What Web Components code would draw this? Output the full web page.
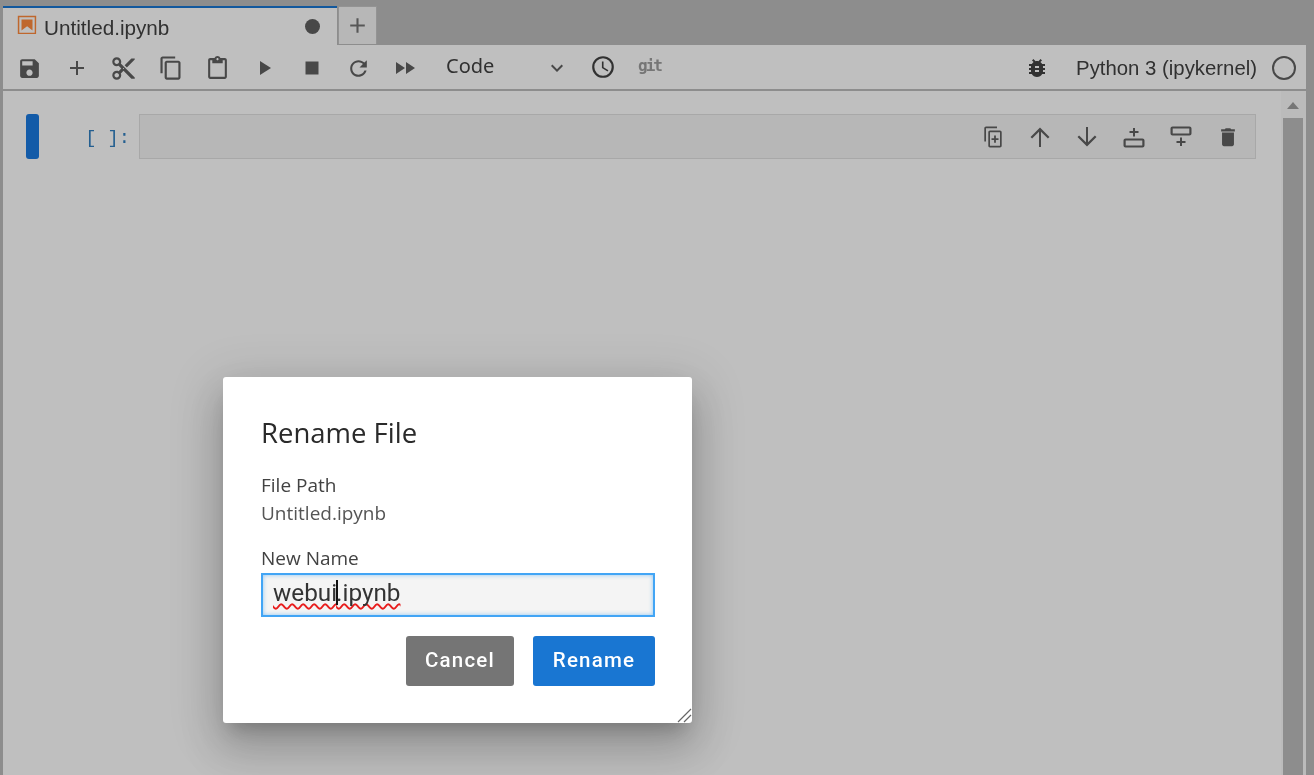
<!DOCTYPE html>
<html lang="en"><head><meta charset="utf-8"><title>Rename File</title>
<style>html,body{margin:0;height:100%;overflow:hidden;background:#8e8e8e}</style></head>
<body>
<jp-app></jp-app>
<script>
const P={
save:'<path d="M17 3H5c-1.11 0-2 .9-2 2v14c0 1.1.89 2 2 2h14c1.1 0 2-.9 2-2V7l-4-4zm-5 16c-1.66 0-3-1.34-3-3s1.34-3 3-3 3 1.34 3 3-1.34 3-3 3zm3-10H5V5h10v4z"/>',
add:'<path d="M19 13h-6v6h-2v-6H5v-2h6V5h2v6h6v2z"/>',
cut:'<path d="M9.64 7.64c.23-.5.36-1.05.36-1.64 0-2.21-1.79-4-4-4S2 3.79 2 6s1.79 4 4 4c.59 0 1.14-.13 1.64-.36L10 12l-2.36 2.36C7.14 14.13 6.59 14 6 14c-2.21 0-4 1.79-4 4s1.79 4 4 4 4-1.79 4-4c0-.59-.13-1.14-.36-1.64L12 14l7 7h3v-1L9.64 7.64zM6 8c-1.1 0-2-.89-2-2s.9-2 2-2 2 .89 2 2-.9 2-2 2zm0 12c-1.1 0-2-.89-2-2s.9-2 2-2 2 .89 2 2-.9 2-2 2zm6-7.5c-.28 0-.5-.22-.5-.5s.22-.5.5-.5.5.22.5.5-.22.5-.5.5zM19 3l-6 6 2 2 7-7V3z"/>',
copy:'<path transform="scale(1.333)" d="M11.9 1H3.2C2.4 1 1.7 1.7 1.7 2.5v10.2h1.5V2.5h8.7V1zM14.1 3.9h-8c-.8 0-1.5.7-1.5 1.5v10.2c0 .8.7 1.5 1.5 1.5h8c.8 0 1.5-.7 1.5-1.5V5.4c0-.8-.7-1.5-1.5-1.5zm0 11.6h-8V5.4h8v10.1z"/>',
paste:'<path d="M19 2h-4.18C14.4.84 13.3 0 12 0c-1.3 0-2.4.84-2.82 2H5c-1.1 0-2 .9-2 2v16c0 1.1.9 2 2 2h14c1.1 0 2-.9 2-2V4c0-1.1-.9-2-2-2zm-7 0c.55 0 1 .45 1 1s-.45 1-1 1-1-.45-1-1 .45-1 1-1zm7 18H5V4h2v3h10V4h2v16z"/>',
run:'<path d="M7 5v14l11-7z"/>',
stop:'<path d="M5.500 5.500h13v13h-13z"/>',
refresh:'<path d="M17.65 6.35C16.2 4.9 14.21 4 12 4c-4.42 0-7.99 3.58-7.99 8s3.57 8 7.99 8c3.73 0 6.84-2.55 7.73-6h-2.08c-.82 2.33-3.04 4-5.65 4-3.31 0-6-2.69-6-6s2.69-6 6-6c1.66 0 3.14.69 4.22 1.78L13 11h7V4l-2.35 2.35z"/>',
ff:'<path d="M2 18l9-6-9-6v12zm10-12v12l9-6-9-6z"/>',
chevron:'<path d="M7.41 8.59L12 13.17l4.59-4.58L18 10l-6 6-6-6z"/>',
clock:'<path d="M12 2a10 10 0 1 0 0 20 10 10 0 0 0 0-20zm0 18a8 8 0 1 1 0-16 8 8 0 0 1 0 16z"/><path d="M12.5 7H11v6l5.2 3.1.8-1.2-4.5-2.7z"/>',
bug:'<path d="M20 8h-2.81c-.45-.78-1.07-1.45-1.82-1.96L17 4.41 15.59 3l-2.17 2.17C12.96 5.06 12.49 5 12 5c-.49 0-.96.06-1.41.17L8.41 3 7 4.41l1.62 1.63C7.88 6.55 7.26 7.22 6.81 8H4v2h2.09c-.05.33-.09.66-.09 1v1H4v2h2v1c0 .34.04.67.09 1H4v2h2.81c1.04 1.79 2.97 3 5.19 3s4.15-1.21 5.19-3H20v-2h-2.09c.05-.33.09-.66.09-1v-1h2v-2h-2v-1c0-.34-.04-.67-.09-1H20V8zm-6 8h-4v-2h4v2zm0-4h-4v-2h4v2z"/>',
dup:'<path d="M5 1.500h11V3.200H5v13.300H3.300V3.200C3.300 2.300 4.100 1.500 5 1.500z"/><path d="M9 5.500h10c.9 0 1.700.8 1.700 1.700v13.600c0 .9-.8 1.700-1.700 1.700H9c-.9 0-1.700-.8-1.700-1.700V7.200C7.300 6.300 8.100 5.500 9 5.500zm0 1.700v13.600h10V7.200H9z" fill-rule="evenodd"/><path d="M13.100 10.500h1.800v2.700h2.600v1.800h-2.600v2.700h-1.800V15h-2.600v-1.800h2.600z"/>',
up:'<path d="M2.500 12l1.600 1.600L11 6.800V22h2V6.800l6.900 6.800 1.600-1.600L12 2.500z"/>',
down:'<path d="M21.500 12l-1.600-1.600L13 17.200V2h-2v15.200l-6.900-6.800L2.500 12l9.500 9.500z"/>',
above:'<path d="M11 3h2v3h3.500v2H13v3.500h-2V8H7.500V6H11z"/><path fill-rule="evenodd" d="M3.500 13.500h17c1.100 0 2 .9 2 2v5c0 1.100-.9 2-2 2h-17c-1.100 0-2-.9-2-2v-5c0-1.100.9-2 2-2zm.2 2.100v4.800h16.600v-4.800H3.700z"/>',
below:'<path d="M11 21h2v-3h3.500v-2H13v-3.500h-2V16H7.500v2H11z"/><path fill-rule="evenodd" d="M3.500 1.500h17c1.100 0 2 .9 2 2v5c0 1.100-.9 2-2 2h-17c-1.100 0-2-.9-2-2v-5c0-1.100.9-2 2-2zm.2 2.100v4.800h16.600V3.600H3.700z"/>',
trash:'<path d="M5.500 20c0 1.100.9 2 2 2h9c1.100 0 2-.9 2-2V7h-13v13zM19.500 3.500h-4l-1-1h-5l-1 1h-4V6h15V3.500z"/>'
};
function def(name,html,init){
  customElements.define(name,class extends HTMLElement{
    constructor(){super();this.attachShadow({mode:'open'}).innerHTML=typeof html==='function'?html(this):html;}
    connectedCallback(){ if(init) init(this); }
  });
}
def('jp-icon',`<style>:host{display:inline-flex;width:var(--s,24px);height:var(--s,24px);color:inherit}svg{width:100%;height:100%;fill:currentColor;display:block}</style><svg viewBox="0 0 24 24"></svg>`,
  el=>{el.shadowRoot.querySelector('svg').innerHTML=P[el.getAttribute('name')]||'';});
def('jp-tool',`<style>:host{display:flex;flex:none;box-sizing:border-box;width:var(--w,47px);height:100%;padding-top:var(--pt,0);align-items:center;justify-content:center;color:#616161}</style><slot></slot>`);
def('jp-tabbar',`<style>
:host{display:flex;height:39px;flex:none;font:20.700px "Liberation Sans",Arial,sans-serif;color:#424242}
.tab{width:334px;box-sizing:border-box;background:#fff;border-top:2.500px solid #1976d2;display:flex;align-items:center;padding:0 16px 0 13px}
.logo{width:22px;height:22px;flex:none;margin-right:6px;margin-top:-3px}
.name{flex:1;margin-top:2px}
.dot{width:15px;height:15px;border-radius:50%;background:#616161;flex:none;margin-right:1px;margin-top:-1px}
.add{width:39px;height:38px;margin-left:1px;box-sizing:border-box;background:#f5f5f5;border-left:1px solid #c4c4c4;border-top:1px solid #c4c4c4;border-right:1px solid #c4c4c4;display:flex;align-items:center;justify-content:center;color:#757575;--s:25px}
</style>
<div class="tab"><svg class="logo" viewBox="0 0 22 22"><path fill="#ff8a3d" d="M18.700 3.300v15.400H3.300V3.300h15.400m1.500-1.500H1.800v18.300h18.300l.1-18.300z"/><path fill="#ff8a3d" d="M16.500 16.500l-5.400-4.300-5.600 4.300v-11h11z"/></svg><span class="name">Untitled.ipynb</span><span class="dot"></span></div>
<div class="add"><jp-icon name="add"></jp-icon></div>`);
def('jp-toolbar',`<style>
:host{display:flex;flex:none;height:44px;margin-top:0;background:#fff;border-bottom:2px solid #bdbdbd;align-items:center;padding-left:3px;font:20.350px "Liberation Sans",Arial,sans-serif;color:#616161;--pt:2px}
.sel{display:flex;align-items:center;width:129px;margin-left:17px;box-sizing:border-box;height:100%;font:20px "Noto Sans","Open Sans",sans-serif;color:#424242;padding-bottom:4px;--s:24px}
.sel span{flex:1}.sel jp-icon{margin-right:6px;margin-top:5px;color:#616161}
.clock{--s:26px;color:#424242;margin-left:15px;margin-top:0}
.git{font:bold 16px "DejaVu Sans Mono","Liberation Mono",monospace;color:#9e9e9e;margin-left:22px;margin-top:-3px;letter-spacing:-2px;width:24px}
.sp{flex:1}
.bug{color:#424242;margin-right:27px;--s:24px;margin-top:2px}
.kn{color:#424242;margin-right:15px;margin-top:2px}
.c{width:20px;height:20px;border:2px solid #616161;border-radius:50%;margin-right:10px;margin-top:2px;flex:none}
</style>
<jp-tool><jp-icon name="save" style="--s:25px"></jp-icon></jp-tool><jp-tool><jp-icon name="add"></jp-icon></jp-tool><jp-tool><jp-icon name="cut" style="--s:27px"></jp-icon></jp-tool><jp-tool><jp-icon name="copy" style="--s:26px"></jp-icon></jp-tool><jp-tool><jp-icon name="paste" style="--s:25px"></jp-icon></jp-tool><jp-tool><jp-icon name="run"></jp-icon></jp-tool><jp-tool><jp-icon name="stop"></jp-icon></jp-tool><jp-tool><jp-icon name="refresh" style="--s:25px"></jp-icon></jp-tool><jp-tool><jp-icon name="ff"></jp-icon></jp-tool>
<div class="sel"><span>Code</span><jp-icon name="chevron"></jp-icon></div>
<jp-icon class="clock" name="clock"></jp-icon><span class="git">git</span><span class="sp"></span>
<jp-icon class="bug" name="bug"></jp-icon><span class="kn">Python 3 (ipykernel)</span><span class="c"></span>`);
def('jp-cell',`<style>
:host{display:flex;height:45px;align-items:stretch;font:18.700px "Liberation Mono",monospace}
.col{width:13px;margin-left:23px;border-radius:3px;flex:none;background:#1a7ae0}
.prompt{width:100px;flex:none;box-sizing:border-box;padding-right:9px;text-align:right;color:#307fc1;align-self:center;line-height:1;white-space:pre;margin-top:3px}
.in{flex:1;box-sizing:border-box;background:#f5f5f5;border:1px solid #e0e0e0;display:flex;justify-content:flex-end;padding-right:4px;color:#616161}
</style>
<div class="col"></div><div class="prompt">[ ]:</div>
<div class="in"><jp-tool><jp-icon name="dup"></jp-icon></jp-tool><jp-tool><jp-icon name="up"></jp-icon></jp-tool><jp-tool><jp-icon name="down"></jp-icon></jp-tool><jp-tool><jp-icon name="above"></jp-icon></jp-tool><jp-tool><jp-icon name="below"></jp-icon></jp-tool><jp-tool><jp-icon name="trash" style="--s:22px"></jp-icon></jp-tool></div>`);
def('jp-scrollbar',`<style>
:host{display:flex;flex-direction:column;flex:none;width:25px;background:#fafafa;align-items:center;box-sizing:border-box;padding-left:0}
.arrow{height:27px;flex:none;width:100%;display:flex;align-items:center;justify-content:center}
.arrow i{width:0;height:0;border:6px solid transparent;border-top:0;border-bottom:7px solid #9e9e9e;margin-top:2px;margin-left:-1px}
.thumb{flex:1;width:20px;background:#bdbdbd;margin-right:1px}
</style><div class="arrow"><i></i></div><div class="thumb"></div>`);
def('jp-notebook',`<style>
:host{display:flex;flex:1;min-height:0;background:#fff}
.main{flex:1;padding-top:23px;padding-right:25px;min-width:0}
</style><div class="main"><jp-cell></jp-cell></div><jp-scrollbar></jp-scrollbar>`);
def('jp-button',`<style>
:host{display:flex;align-items:center;justify-content:center;height:50px;border-radius:3px;box-sizing:border-box;padding-bottom:2px;color:#fff;background:var(--bg);font:500 20.500px Roboto,"Liberation Sans",sans-serif;letter-spacing:1.200px;width:var(--w)}
</style><slot></slot>`);
def('jp-rename-dialog',`<style>
:host{position:absolute;left:223px;top:377px;width:469px;height:346px;box-sizing:border-box;background:#fff;border-radius:3px;padding:33px 37px 0 38px;font:19px "Open Sans","Noto Sans",sans-serif;color:#424242;box-shadow:0 13px 17px -8px rgba(0,0,0,.2),0 26px 41px 4px rgba(0,0,0,.14),0 10px 50px 9px rgba(0,0,0,.12)}
h2{margin:0 0 15px;font:400 27.500px/46px "Open Sans","Noto Sans",sans-serif;color:#2a2a2a;height:46px}
.l{line-height:28px;height:28px;white-space:nowrap}
.path{color:#555;margin-bottom:17px}
.l2{margin-bottom:1px}
.input{display:flex;align-items:center;height:44px;box-sizing:border-box;border:2px solid #42a5f5;background:#f4f4f4;box-shadow:inset 0 0 4px rgba(33,150,243,.5);padding:0 10px 5px;font:24.300px Roboto,"Liberation Sans",sans-serif;color:#333;white-space:nowrap}
.t{text-decoration:underline wavy #e81c1c 1.500px;text-underline-offset:2px;text-decoration-skip-ink:none}
.caret{display:inline-block;width:2px;height:25px;background:#111;margin:0 -2px -4px -1px;vertical-align:baseline}
.btns{display:flex;justify-content:flex-end;gap:19px;margin-top:19px}
.grip{position:absolute;right:0;bottom:0;width:16px;height:16px}
</style>
<h2>Rename File</h2>
<div class="l">File Path</div><div class="l path">Untitled.ipynb</div>
<div class="l l2">New Name</div>
<div class="input"><span class="t">webui<span class="caret"></span>.ipynb</span></div>
<div class="btns"><jp-button style="--bg:#757575;--w:108px">Cancel</jp-button><jp-button style="--bg:#1976d2;--w:122px">Rename</jp-button></div>
<svg class="grip" viewBox="0 0 16 16"><path d="M2 15L15 2M8 15l7-7" stroke="#666" stroke-width="1.200" fill="none"/></svg>`);
def('jp-app',`<style>
:host{display:block;position:relative;width:1314px;height:775px;overflow:hidden;filter:blur(.45px)}
.frame{display:flex;flex-direction:column;box-sizing:border-box;height:100%;padding:6px 8px 0 3px;background:#bdbdbd}
.overlay{position:absolute;inset:0;background:rgba(0,0,0,.25)}
</style>
<div class="frame"><jp-tabbar></jp-tabbar><jp-toolbar></jp-toolbar><jp-notebook></jp-notebook></div>
<div class="overlay"></div><jp-rename-dialog></jp-rename-dialog>`);
</script>
</body></html>
